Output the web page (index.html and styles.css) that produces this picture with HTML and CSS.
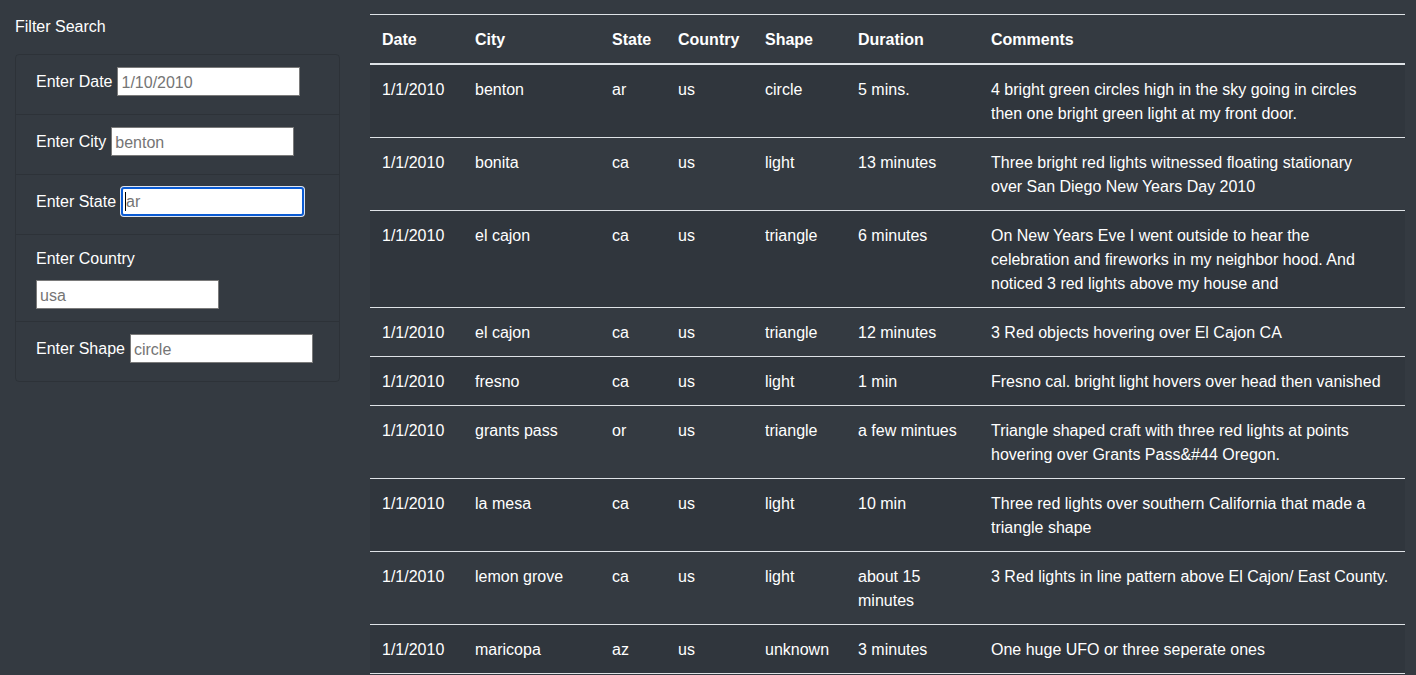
FILE: index.html
```html
<!DOCTYPE html>
<html lang="en">
<head>
<meta charset="utf-8">
<title>UFO Sightings</title>
<link rel="stylesheet" href="styles.css">
</head>
<body>
<div class="page">
  <aside class="sidebar">
    <div class="filter-title">Filter Search</div>
    <ul class="filter-card">
      <li class="filter-item"><label class="filter-label">Enter Date</label><input class="filter-input" type="text" placeholder="1/10/2010"></li>
      <li class="filter-item"><label class="filter-label">Enter City</label><input class="filter-input" type="text" placeholder="benton"></li>
      <li class="filter-item"><label class="filter-label">Enter State</label><span class="focus-wrap"><input class="filter-input is-focused" type="text" placeholder="ar"><span class="caret"></span></span></li>
      <li class="filter-item filter-item--stacked"><label class="filter-label">Enter Country</label><input class="filter-input" type="text" placeholder="usa"></li>
      <li class="filter-item"><label class="filter-label">Enter Shape</label><input class="filter-input" type="text" placeholder="circle"></li>
    </ul>
  </aside>
  <main class="content">
    <table class="ufo-table">
      <colgroup>
        <col class="c-date"><col class="c-city"><col class="c-state"><col class="c-country"><col class="c-shape"><col class="c-duration"><col class="c-comments">
      </colgroup>
      <thead>
        <tr><th>Date</th><th>City</th><th>State</th><th>Country</th><th>Shape</th><th>Duration</th><th>Comments</th></tr>
      </thead>
      <tbody>
        <tr><td>1/1/2010</td><td>benton</td><td>ar</td><td>us</td><td>circle</td><td>5 mins.</td><td>4 bright green circles high in the sky going in circles<br>then one bright green light at my front door.</td></tr>
        <tr><td>1/1/2010</td><td>bonita</td><td>ca</td><td>us</td><td>light</td><td>13 minutes</td><td>Three bright red lights witnessed floating stationary<br>over San Diego New Years Day 2010</td></tr>
        <tr><td>1/1/2010</td><td>el cajon</td><td>ca</td><td>us</td><td>triangle</td><td>6 minutes</td><td>On New Years Eve I went outside to hear the<br>celebration and fireworks in my neighbor hood. And<br>noticed 3 red lights above my house and</td></tr>
        <tr><td>1/1/2010</td><td>el cajon</td><td>ca</td><td>us</td><td>triangle</td><td>12 minutes</td><td>3 Red objects hovering over El Cajon CA</td></tr>
        <tr><td>1/1/2010</td><td>fresno</td><td>ca</td><td>us</td><td>light</td><td>1 min</td><td>Fresno cal. bright light hovers over head then vanished</td></tr>
        <tr><td>1/1/2010</td><td>grants pass</td><td>or</td><td>us</td><td>triangle</td><td>a few mintues</td><td>Triangle shaped craft with three red lights at points<br>hovering over Grants Pass&amp;#44 Oregon.</td></tr>
        <tr><td>1/1/2010</td><td>la mesa</td><td>ca</td><td>us</td><td>light</td><td>10 min</td><td>Three red lights over southern California that made a<br>triangle shape</td></tr>
        <tr><td>1/1/2010</td><td>lemon grove</td><td>ca</td><td>us</td><td>light</td><td>about 15<br>minutes</td><td>3 Red lights in line pattern above El Cajon/ East County.</td></tr>
        <tr><td>1/1/2010</td><td>maricopa</td><td>az</td><td>us</td><td>unknown</td><td>3 minutes</td><td>One huge UFO or three seperate ones</td></tr>
      </tbody>
    </table>
  </main>
</div>
</body>
</html>
```

FILE: styles.css
```css
* { box-sizing: border-box; }

html, body {
  margin: 0;
  padding: 0;
  background: #343a41;
  color: #fff;
  font-family: "Liberation Sans", Arial, sans-serif;
  font-size: 16px;
  line-height: 1.5;
  overflow: hidden;
}

.page {
  display: flex;
  gap: 30px;
  padding: 14px 11px 0 15px;
}

.sidebar {
  width: 325px;
  flex: 0 0 325px;
}

.filter-title {
  line-height: 24px;
  padding-top: 1px;
  margin-bottom: 15px;
}

.filter-card {
  list-style: none;
  margin: 0;
  padding: 0;
  border: 1px solid rgba(0, 0, 0, 0.13);
  border-radius: 4px;
}

.filter-item {
  display: flex;
  flex-wrap: wrap;
  align-items: flex-start;
  column-gap: 5px;
  padding: 12px 20px;
  border-top: 1px solid rgba(0, 0, 0, 0.13);
}
.filter-item:first-child { border-top: 0; }

.filter-label {
  display: block;
  line-height: 24px;
  padding-top: 3px;
  margin-bottom: 8px;
  white-space: nowrap;
}

.filter-item--stacked .filter-label {
  padding-top: 0;
  margin-bottom: 9px;
}

.filter-input {
  display: block;
  width: 183px;
  height: 29px;
  margin: 0;
  padding: 2px 3px 0;
  border: 1px solid #7a7a7a;
  background: #fff;
  font-family: "Liberation Sans", Arial, sans-serif;
  font-size: 16px;
  color: #222;
  border-radius: 0;
  outline: none;
}
.filter-input::placeholder { color: #757575; }

.focus-wrap {
  position: relative;
  display: block;
}

.filter-input.is-focused {
  border: 2px solid #0b5bd3;
  border-radius: 3px;
  box-shadow: 0 0 0 1px #dfe6f0;
  padding: 1px 3px 0;
}

.caret {
  position: absolute;
  left: 4px;
  top: 5px;
  width: 1px;
  height: 19px;
  background: #000;
}

.content {
  flex: 1;
  min-width: 0;
}

.ufo-table {
  width: 100%;
  table-layout: fixed;
  border-collapse: collapse;
  color: #fff;
}

.c-date { width: 93px; }
.c-city { width: 137px; }
.c-state { width: 66px; }
.c-country { width: 87px; }
.c-shape { width: 93px; }
.c-duration { width: 133px; }

.ufo-table th,
.ufo-table td {
  padding: 13px 12px 11px;
  text-align: left;
  vertical-align: top;
  border-top: 1px solid #dee2e6;
  line-height: 24px;
}

.ufo-table th {
  font-weight: bold;
  border-bottom: 2px solid #dee2e6;
}

.ufo-table tbody tr:nth-child(odd) {
  background: rgba(0, 0, 0, 0.06);
}

.ufo-table tbody tr:last-child td {
  border-bottom: 1px solid #dee2e6;
}
```
